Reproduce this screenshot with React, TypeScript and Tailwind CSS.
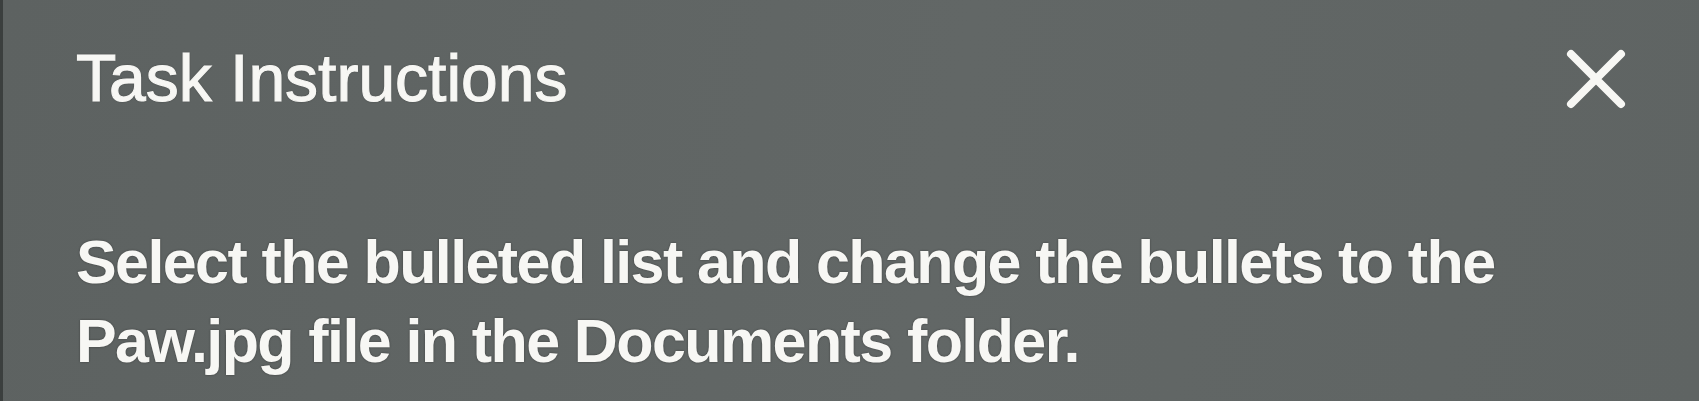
export default function App() {
  return (
    <div className="h-[401px] w-[1699px] overflow-hidden border-l-[3px] border-[#3b3f3e] bg-[linear-gradient(100deg,#5d6261_0%,#626766_55%,#5f6463_100%)] font-['Liberation_Sans',Arial,sans-serif] text-[#f7f7f4] [text-shadow:0_0_2px_rgba(30,30,30,0.6)]">
      <div className="flex flex-col pl-[73px] pr-[72px] pt-[46px]">
        <div className="flex items-center justify-between">
          <h1 className="text-[66px] leading-[65px] font-normal tracking-[0px] [-webkit-text-stroke:1.1px_#f7f7f4]">Task Instructions</h1>
          <button aria-label="Close" className="flex h-[62px] w-[62px] items-center justify-center">
            <svg width="62" height="62" viewBox="0 0 62 62" fill="none" stroke="#f7f7f4" strokeWidth="8" strokeLinecap="round">
              <path d="M6 6 L56 56 M56 6 L6 56" />
            </svg>
          </button>
        </div>
        <p className="mt-[112px] max-w-[1500px] text-[61px] leading-[79px] font-bold tracking-[-1.6px]">
          Select the bulleted list and change the bullets to the
          <br />
          Paw.jpg file in the Documents folder.
        </p>
      </div>
    </div>
  );
}
